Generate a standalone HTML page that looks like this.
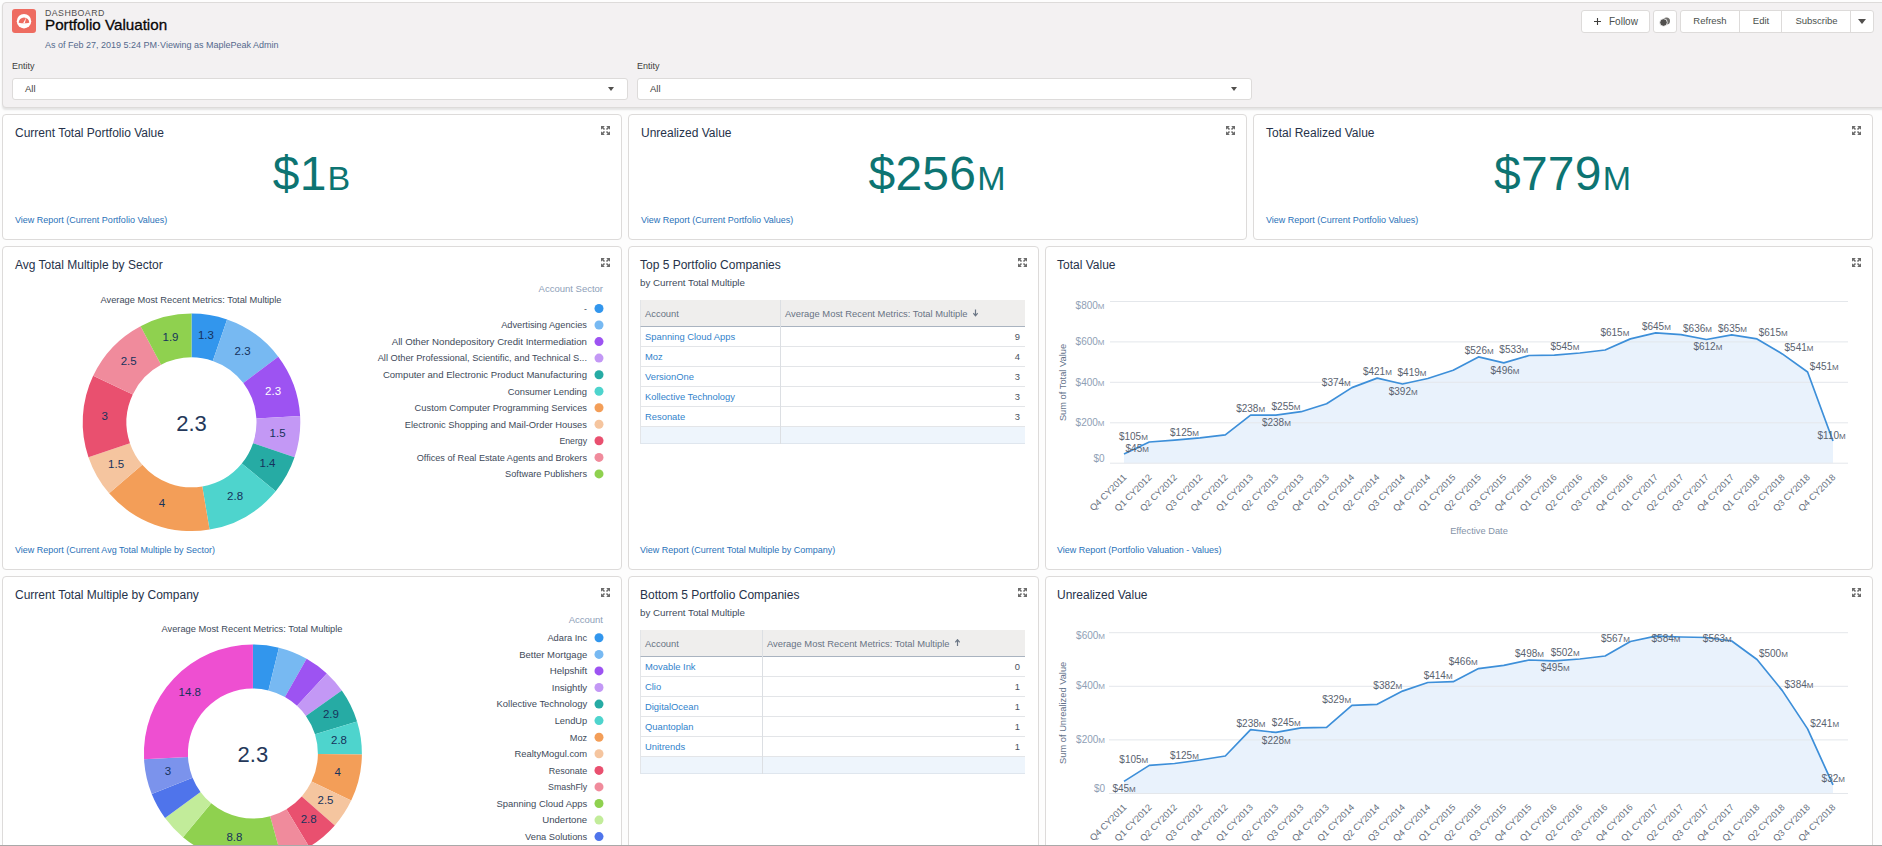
<!DOCTYPE html><html><head><meta charset='utf-8'><style>
*{box-sizing:border-box;margin:0;padding:0}
html,body{width:1882px;height:846px;overflow:hidden;background:#fdfdfd;font-family:"Liberation Sans", sans-serif;position:relative}
.abs{position:absolute}
.hdr{position:absolute;left:2px;top:2px;width:1900px;height:106px;background:#f3f1f2;border:1px solid #dddbda;border-radius:4px;box-shadow:0 2px 2px rgba(0,0,0,.10)}
.panel{position:absolute;background:#fff;border:1px solid #dddbda;border-radius:4px}
.ttl{position:absolute;font-size:12px;color:#26324a;white-space:nowrap;line-height:14px}
.sub{position:absolute;font-size:9.75px;color:#3e4a5a;white-space:nowrap;line-height:12px}
.lnk{position:absolute;font-size:9px;color:#2a72b9;white-space:nowrap;line-height:11px}
.exp{position:absolute;width:9px;height:9px} .exp svg{display:block}
.big{position:absolute;color:#0d7472;white-space:nowrap;font-size:48px;line-height:50px;text-align:center;letter-spacing:0.2px}
.big small{font-size:34px;letter-spacing:0;margin-left:1px}
.btn{position:absolute;top:10px;height:23px;background:#fff;border:1px solid #dddbda;border-radius:3px;font-size:9.5px;color:#4a4f4c;line-height:21px;text-align:center;white-space:nowrap}
.sel{position:absolute;top:78px;height:22px;background:#fff;border:1px solid #dddbda;border-radius:3px;font-size:9.5px;color:#3e3e3c;line-height:20px;padding-left:12px}
.lbl{position:absolute;top:61px;font-size:9px;color:#3e3e3c;line-height:11px}
.arr{position:absolute;top:8px;width:0;height:0;border-left:3.5px solid transparent;border-right:3.5px solid transparent;border-top:4px solid #514f4d}
table{border-collapse:collapse;position:absolute;font-size:9.4px}
</style></head><body><div class="hdr"></div>
<div class="abs" style="left:12px;top:9px;width:24px;height:24px;background:#ee6c61;border-radius:3px"><svg width="24" height="24" viewBox="0 0 24 24" style="position:absolute;left:0;top:0"><circle cx="12" cy="12.2" r="7.2" fill="#fff"/><path d="M6.7,13.8A5.3,5.3 0 0 1 17.3,13.8Q12,14.8 6.7,13.8Z" fill="#ee6c61"/><path d="M11.2,13.9L14.3,8.6L12.8,14.2Z" fill="#fff"/></svg></div>
<div class="abs" style="left:45px;top:8px;font-size:8.8px;letter-spacing:0.45px;color:#514f4d;line-height:10px">DASHBOARD</div>
<div class="abs" style="left:45px;top:16px;font-size:15.2px;color:#080707;line-height:17px;-webkit-text-stroke:0.3px #080707">Portfolio Valuation</div>
<div class="abs" style="left:45px;top:40px;font-size:9px;color:#54698d;line-height:11px">As of Feb 27, 2019 5:24 PM·Viewing as MaplePeak Admin</div>
<div class="btn" style="left:1581px;width:69px"><svg width="9" height="9" viewBox="0 0 9 9" style="position:absolute;left:11px;top:6px"><path d="M4.5,1V8M1,4.5H8" stroke="#3e3e3c" stroke-width="1.1"/></svg><span style="position:absolute;left:27px;top:0;font-size:10px">Follow</span></div>
<div class="btn" style="left:1653px;width:24px"><svg width="12" height="10" viewBox="0 0 12 10" style="position:absolute;left:5px;top:6px"><circle cx="7.5" cy="4" r="3.5" fill="#706e6b"/><circle cx="4.5" cy="5.5" r="3.8" fill="#514f4d" stroke="#fff" stroke-width="0.8"/></svg></div>
<div class="btn" style="left:1680px;width:194px"></div>
<div class="abs" style="left:1680px;top:10px;width:60px;height:23px;line-height:21px;text-align:center;font-size:9.5px;color:#4a4f4c">Refresh</div>
<div class="abs" style="left:1739px;top:11px;width:1px;height:21px;background:#dddbda"></div>
<div class="abs" style="left:1740px;top:10px;width:42px;height:23px;line-height:21px;text-align:center;font-size:9.5px;color:#4a4f4c">Edit</div>
<div class="abs" style="left:1781px;top:11px;width:1px;height:21px;background:#dddbda"></div>
<div class="abs" style="left:1782px;top:10px;width:69px;height:23px;line-height:21px;text-align:center;font-size:9.5px;color:#4a4f4c">Subscribe</div>
<div class="abs" style="left:1850px;top:11px;width:1px;height:21px;background:#dddbda"></div>
<div class="abs" style="left:1858px;top:19px;width:0;height:0;border-left:4px solid transparent;border-right:4px solid transparent;border-top:5px solid #514f4d"></div>
<div class="lbl" style="left:12px">Entity</div>
<div class="sel" style="left:12px;width:616px">All<div class="arr" style="left:595px"></div></div>
<div class="lbl" style="left:637px">Entity</div>
<div class="sel" style="left:637px;width:615px">All<div class="arr" style="left:593px"></div></div>
<div class="panel" style="left:2px;top:114px;width:620px;height:126px"></div>
<div class="panel" style="left:628px;top:114px;width:619px;height:126px"></div>
<div class="panel" style="left:1253px;top:114px;width:620px;height:126px"></div>
<div class="panel" style="left:2px;top:246px;width:620px;height:324px"></div>
<div class="panel" style="left:628px;top:246px;width:411px;height:324px"></div>
<div class="panel" style="left:1045px;top:246px;width:828px;height:324px"></div>
<div class="panel" style="left:2px;top:576px;width:620px;height:325px"></div>
<div class="panel" style="left:628px;top:576px;width:411px;height:325px"></div>
<div class="panel" style="left:1045px;top:576px;width:828px;height:325px"></div>
<div class="ttl" style="left:15px;top:126px">Current Total Portfolio Value</div>
<div class="big" style="left:2px;width:619px;top:149px">$1<small>B</small></div>
<div class="lnk" style="left:15px;top:215px">View Report (Current Portfolio Values)</div>
<div class="exp" style="left:601px;top:126px"><svg width="9" height="9" viewBox="0 0 9 9"><g fill="#6b6b6b" stroke="#6b6b6b" stroke-width="1.6" stroke-linecap="butt"><path d="M0,0H3.8L0,3.8Z" stroke="none"/><path d="M9,0V3.8L5.2,0Z" stroke="none"/><path d="M0,9V5.2L3.8,9Z" stroke="none"/><path d="M9,9H5.2L9,5.2Z" stroke="none"/><path d="M1.5,1.5L3.5,3.5M7.5,1.5L5.5,3.5M1.5,7.5L3.5,5.5M7.5,7.5L5.5,5.5" fill="none"/></g></svg></div>
<div class="ttl" style="left:641px;top:126px">Unrealized Value</div>
<div class="big" style="left:628px;width:618px;top:149px">$256<small>M</small></div>
<div class="lnk" style="left:641px;top:215px">View Report (Current Portfolio Values)</div>
<div class="exp" style="left:1226px;top:126px"><svg width="9" height="9" viewBox="0 0 9 9"><g fill="#6b6b6b" stroke="#6b6b6b" stroke-width="1.6" stroke-linecap="butt"><path d="M0,0H3.8L0,3.8Z" stroke="none"/><path d="M9,0V3.8L5.2,0Z" stroke="none"/><path d="M0,9V5.2L3.8,9Z" stroke="none"/><path d="M9,9H5.2L9,5.2Z" stroke="none"/><path d="M1.5,1.5L3.5,3.5M7.5,1.5L5.5,3.5M1.5,7.5L3.5,5.5M7.5,7.5L5.5,5.5" fill="none"/></g></svg></div>
<div class="ttl" style="left:1266px;top:126px">Total Realized Value</div>
<div class="big" style="left:1253px;width:619px;top:149px">$779<small>M</small></div>
<div class="lnk" style="left:1266px;top:215px">View Report (Current Portfolio Values)</div>
<div class="exp" style="left:1852px;top:126px"><svg width="9" height="9" viewBox="0 0 9 9"><g fill="#6b6b6b" stroke="#6b6b6b" stroke-width="1.6" stroke-linecap="butt"><path d="M0,0H3.8L0,3.8Z" stroke="none"/><path d="M9,0V3.8L5.2,0Z" stroke="none"/><path d="M0,9V5.2L3.8,9Z" stroke="none"/><path d="M9,9H5.2L9,5.2Z" stroke="none"/><path d="M1.5,1.5L3.5,3.5M7.5,1.5L5.5,3.5M1.5,7.5L3.5,5.5M7.5,7.5L5.5,5.5" fill="none"/></g></svg></div>
<div class="ttl" style="left:15px;top:258px">Avg Total Multiple by Sector</div>
<div class="ttl" style="left:640px;top:258px">Top 5 Portfolio Companies</div>
<div class="sub" style="left:640px;top:277px">by Current Total Multiple</div>
<div class="ttl" style="left:1057px;top:258px">Total Value</div>
<div class="lnk" style="left:15px;top:545px">View Report (Current Avg Total Multiple by Sector)</div>
<div class="lnk" style="left:640px;top:545px">View Report (Current Total Multiple by Company)</div>
<div class="lnk" style="left:1057px;top:545px">View Report (Portfolio Valuation - Values)</div>
<div class="exp" style="left:601px;top:258px"><svg width="9" height="9" viewBox="0 0 9 9"><g fill="#6b6b6b" stroke="#6b6b6b" stroke-width="1.6" stroke-linecap="butt"><path d="M0,0H3.8L0,3.8Z" stroke="none"/><path d="M9,0V3.8L5.2,0Z" stroke="none"/><path d="M0,9V5.2L3.8,9Z" stroke="none"/><path d="M9,9H5.2L9,5.2Z" stroke="none"/><path d="M1.5,1.5L3.5,3.5M7.5,1.5L5.5,3.5M1.5,7.5L3.5,5.5M7.5,7.5L5.5,5.5" fill="none"/></g></svg></div>
<div class="exp" style="left:1018px;top:258px"><svg width="9" height="9" viewBox="0 0 9 9"><g fill="#6b6b6b" stroke="#6b6b6b" stroke-width="1.6" stroke-linecap="butt"><path d="M0,0H3.8L0,3.8Z" stroke="none"/><path d="M9,0V3.8L5.2,0Z" stroke="none"/><path d="M0,9V5.2L3.8,9Z" stroke="none"/><path d="M9,9H5.2L9,5.2Z" stroke="none"/><path d="M1.5,1.5L3.5,3.5M7.5,1.5L5.5,3.5M1.5,7.5L3.5,5.5M7.5,7.5L5.5,5.5" fill="none"/></g></svg></div>
<div class="exp" style="left:1852px;top:258px"><svg width="9" height="9" viewBox="0 0 9 9"><g fill="#6b6b6b" stroke="#6b6b6b" stroke-width="1.6" stroke-linecap="butt"><path d="M0,0H3.8L0,3.8Z" stroke="none"/><path d="M9,0V3.8L5.2,0Z" stroke="none"/><path d="M0,9V5.2L3.8,9Z" stroke="none"/><path d="M9,9H5.2L9,5.2Z" stroke="none"/><path d="M1.5,1.5L3.5,3.5M7.5,1.5L5.5,3.5M1.5,7.5L3.5,5.5M7.5,7.5L5.5,5.5" fill="none"/></g></svg></div>
<div class="ttl" style="left:15px;top:588px">Current Total Multiple by Company</div>
<div class="ttl" style="left:640px;top:588px">Bottom 5 Portfolio Companies</div>
<div class="sub" style="left:640px;top:607px">by Current Total Multiple</div>
<div class="ttl" style="left:1057px;top:588px">Unrealized Value</div>
<div class="exp" style="left:601px;top:588px"><svg width="9" height="9" viewBox="0 0 9 9"><g fill="#6b6b6b" stroke="#6b6b6b" stroke-width="1.6" stroke-linecap="butt"><path d="M0,0H3.8L0,3.8Z" stroke="none"/><path d="M9,0V3.8L5.2,0Z" stroke="none"/><path d="M0,9V5.2L3.8,9Z" stroke="none"/><path d="M9,9H5.2L9,5.2Z" stroke="none"/><path d="M1.5,1.5L3.5,3.5M7.5,1.5L5.5,3.5M1.5,7.5L3.5,5.5M7.5,7.5L5.5,5.5" fill="none"/></g></svg></div>
<div class="exp" style="left:1018px;top:588px"><svg width="9" height="9" viewBox="0 0 9 9"><g fill="#6b6b6b" stroke="#6b6b6b" stroke-width="1.6" stroke-linecap="butt"><path d="M0,0H3.8L0,3.8Z" stroke="none"/><path d="M9,0V3.8L5.2,0Z" stroke="none"/><path d="M0,9V5.2L3.8,9Z" stroke="none"/><path d="M9,9H5.2L9,5.2Z" stroke="none"/><path d="M1.5,1.5L3.5,3.5M7.5,1.5L5.5,3.5M1.5,7.5L3.5,5.5M7.5,7.5L5.5,5.5" fill="none"/></g></svg></div>
<div class="exp" style="left:1852px;top:588px"><svg width="9" height="9" viewBox="0 0 9 9"><g fill="#6b6b6b" stroke="#6b6b6b" stroke-width="1.6" stroke-linecap="butt"><path d="M0,0H3.8L0,3.8Z" stroke="none"/><path d="M9,0V3.8L5.2,0Z" stroke="none"/><path d="M0,9V5.2L3.8,9Z" stroke="none"/><path d="M9,9H5.2L9,5.2Z" stroke="none"/><path d="M1.5,1.5L3.5,3.5M7.5,1.5L5.5,3.5M1.5,7.5L3.5,5.5M7.5,7.5L5.5,5.5" fill="none"/></g></svg></div>
<svg class="abs" style="left:0;top:0" width="1882" height="846" viewBox="0 0 1882 846" font-family='"Liberation Sans", sans-serif'><text x="191" y="303" text-anchor="middle" font-size="9.3" fill="#3e4a5a">Average Most Recent Metrics: Total Multiple</text>
<path d="M191.50,313.50A108.8,108.8 0 0 1 227.10,319.49L212.77,360.88A65,65 0 0 0 191.50,357.30Z" fill="#3296ed"/>
<text x="205.9" y="339.4" text-anchor="middle" font-size="11.5" fill="#16325c">1.3</text>
<path d="M227.10,319.49A108.8,108.8 0 0 1 278.27,356.67L243.34,383.09A65,65 0 0 0 212.77,360.88Z" fill="#77b9f2"/>
<text x="242.6" y="354.8" text-anchor="middle" font-size="11.5" fill="#16325c">2.3</text>
<path d="M278.27,356.67A108.8,108.8 0 0 1 300.12,416.03L256.39,418.55A65,65 0 0 0 243.34,383.09Z" fill="#9d53f2"/>
<text x="273.1" y="395.1" text-anchor="middle" font-size="11.5" fill="#ffffff">2.3</text>
<path d="M300.12,416.03A108.8,108.8 0 0 1 294.54,457.25L253.06,443.18A65,65 0 0 0 256.39,418.55Z" fill="#c398f5"/>
<text x="277.6" y="436.8" text-anchor="middle" font-size="11.5" fill="#16325c">1.5</text>
<path d="M294.54,457.25A108.8,108.8 0 0 1 275.69,491.22L241.80,463.48A65,65 0 0 0 253.06,443.18Z" fill="#26aba4"/>
<text x="267.5" y="467.3" text-anchor="middle" font-size="11.5" fill="#16325c">1.4</text>
<path d="M275.69,491.22A108.8,108.8 0 0 1 209.55,529.59L202.29,486.40A65,65 0 0 0 241.80,463.48Z" fill="#4ed4cd"/>
<text x="235.1" y="500.3" text-anchor="middle" font-size="11.5" fill="#16325c">2.8</text>
<path d="M209.55,529.59A108.8,108.8 0 0 1 109.11,493.36L142.28,464.75A65,65 0 0 0 202.29,486.40Z" fill="#f39e58"/>
<text x="162.0" y="506.8" text-anchor="middle" font-size="11.5" fill="#16325c">4</text>
<path d="M109.11,493.36A108.8,108.8 0 0 1 88.46,457.25L129.94,443.18A65,65 0 0 0 142.28,464.75Z" fill="#f5c59f"/>
<text x="116.1" y="468.2" text-anchor="middle" font-size="11.5" fill="#16325c">1.5</text>
<path d="M88.46,457.25A108.8,108.8 0 0 1 93.17,375.72L132.76,394.47A65,65 0 0 0 129.94,443.18Z" fill="#e9506f"/>
<text x="104.7" y="420.1" text-anchor="middle" font-size="11.5" fill="#16325c">3</text>
<path d="M93.17,375.72A108.8,108.8 0 0 1 140.56,326.16L161.07,364.86A65,65 0 0 0 132.76,394.47Z" fill="#f08b9c"/>
<text x="128.7" y="365.0" text-anchor="middle" font-size="11.5" fill="#16325c">2.5</text>
<path d="M140.56,326.16A108.8,108.8 0 0 1 191.50,313.50L191.50,357.30A65,65 0 0 0 161.07,364.86Z" fill="#8fd14f"/>
<text x="170.5" y="340.8" text-anchor="middle" font-size="11.5" fill="#16325c">1.9</text>
<text x="191.5" y="431" text-anchor="middle" font-size="22" fill="#25385a">2.3</text>
<text x="603" y="292" text-anchor="end" font-size="9.5" fill="#8ea0b8">Account Sector</text>
<text x="584.1" y="311.8" textLength="2.9" lengthAdjust="spacingAndGlyphs" font-size="9.5" fill="#3e4a5a">-</text>
<circle cx="599" cy="308.5" r="4.5" fill="#3296ed"/>
<text x="501.2" y="328.3" textLength="85.8" lengthAdjust="spacingAndGlyphs" font-size="9.5" fill="#3e4a5a">Advertising Agencies</text>
<circle cx="599" cy="325.0" r="4.5" fill="#77b9f2"/>
<text x="391.7" y="344.9" textLength="195.3" lengthAdjust="spacingAndGlyphs" font-size="9.5" fill="#3e4a5a">All Other Nondepository Credit Intermediation</text>
<circle cx="599" cy="341.6" r="4.5" fill="#9d53f2"/>
<text x="377.7" y="361.4" textLength="209.3" lengthAdjust="spacingAndGlyphs" font-size="9.5" fill="#3e4a5a">All Other Professional, Scientific, and Technical S...</text>
<circle cx="599" cy="358.1" r="4.5" fill="#c398f5"/>
<text x="382.9" y="378.0" textLength="204.1" lengthAdjust="spacingAndGlyphs" font-size="9.5" fill="#3e4a5a">Computer and Electronic Product Manufacturing</text>
<circle cx="599" cy="374.7" r="4.5" fill="#26aba4"/>
<text x="507.7" y="394.5" textLength="79.3" lengthAdjust="spacingAndGlyphs" font-size="9.5" fill="#3e4a5a">Consumer Lending</text>
<circle cx="599" cy="391.2" r="4.5" fill="#4ed4cd"/>
<text x="414.6" y="411.0" textLength="172.4" lengthAdjust="spacingAndGlyphs" font-size="9.5" fill="#3e4a5a">Custom Computer Programming Services</text>
<circle cx="599" cy="407.7" r="4.5" fill="#f39e58"/>
<text x="404.7" y="427.6" textLength="182.3" lengthAdjust="spacingAndGlyphs" font-size="9.5" fill="#3e4a5a">Electronic Shopping and Mail-Order Houses</text>
<circle cx="599" cy="424.3" r="4.5" fill="#f5c59f"/>
<text x="559.4" y="444.1" textLength="27.6" lengthAdjust="spacingAndGlyphs" font-size="9.5" fill="#3e4a5a">Energy</text>
<circle cx="599" cy="440.8" r="4.5" fill="#e9506f"/>
<text x="416.7" y="460.7" textLength="170.3" lengthAdjust="spacingAndGlyphs" font-size="9.5" fill="#3e4a5a">Offices of Real Estate Agents and Brokers</text>
<circle cx="599" cy="457.4" r="4.5" fill="#f08b9c"/>
<text x="505.1" y="477.2" textLength="81.9" lengthAdjust="spacingAndGlyphs" font-size="9.5" fill="#3e4a5a">Software Publishers</text>
<circle cx="599" cy="473.9" r="4.5" fill="#8fd14f"/>
<text x="252" y="632" text-anchor="middle" font-size="9.3" fill="#3e4a5a">Average Most Recent Metrics: Total Multiple</text>
<path d="M252.90,644.50A109,109 0 0 1 278.94,647.66L268.43,690.38A65,65 0 0 0 252.90,688.50Z" fill="#3296ed"/>
<path d="M278.94,647.66A109,109 0 0 1 306.62,658.66L284.94,696.94A65,65 0 0 0 268.43,690.38Z" fill="#77b9f2"/>
<path d="M306.62,658.66A109,109 0 0 1 326.85,673.42L297.00,705.75A65,65 0 0 0 284.94,696.94Z" fill="#9d53f2"/>
<path d="M326.85,673.42A109,109 0 0 1 341.81,690.45L305.92,715.90A65,65 0 0 0 297.00,705.75Z" fill="#c398f5"/>
<path d="M341.81,690.45A109,109 0 0 1 357.07,721.41L315.02,734.37A65,65 0 0 0 305.92,715.90Z" fill="#26aba4"/>
<text x="330.9" y="717.8" text-anchor="middle" font-size="11.5" fill="#16325c">2.9</text>
<path d="M357.07,721.41A109,109 0 0 1 361.90,754.40L317.90,754.03A65,65 0 0 0 315.02,734.37Z" fill="#4ed4cd"/>
<text x="339.0" y="743.7" text-anchor="middle" font-size="11.5" fill="#16325c">2.8</text>
<path d="M361.90,754.40A109,109 0 0 1 351.20,800.60L311.52,781.59A65,65 0 0 0 317.90,754.03Z" fill="#f39e58"/>
<text x="337.7" y="775.9" text-anchor="middle" font-size="11.5" fill="#16325c">4</text>
<path d="M351.20,800.60A109,109 0 0 1 334.78,825.45L301.73,796.41A65,65 0 0 0 311.52,781.59Z" fill="#f5c59f"/>
<text x="325.5" y="804.3" text-anchor="middle" font-size="11.5" fill="#16325c">2.5</text>
<path d="M334.78,825.45A109,109 0 0 1 309.20,846.83L286.47,809.16A65,65 0 0 0 301.73,796.41Z" fill="#e9506f"/>
<text x="308.7" y="823.0" text-anchor="middle" font-size="11.5" fill="#16325c">2.8</text>
<path d="M309.20,846.83A109,109 0 0 1 281.83,858.59L270.15,816.17A65,65 0 0 0 286.47,809.16Z" fill="#f08b9c"/>
<path d="M281.83,858.59A109,109 0 0 1 182.99,837.13L211.21,803.37A65,65 0 0 0 270.15,816.17Z" fill="#8fd14f"/>
<text x="234.4" y="841.3" text-anchor="middle" font-size="11.5" fill="#16325c">8.8</text>
<path d="M182.99,837.13A109,109 0 0 1 165.03,818.00L200.50,791.97A65,65 0 0 0 211.21,803.37Z" fill="#c2ec9a"/>
<path d="M165.03,818.00A109,109 0 0 1 151.72,794.04L192.56,777.67A65,65 0 0 0 200.50,791.97Z" fill="#4f74eb"/>
<path d="M151.72,794.04A109,109 0 0 1 144.05,759.17L187.99,756.88A65,65 0 0 0 192.56,777.67Z" fill="#7b93ec"/>
<text x="167.9" y="775.0" text-anchor="middle" font-size="11.5" fill="#16325c">3</text>
<path d="M144.05,759.17A109,109 0 0 1 252.90,644.50L252.90,688.50A65,65 0 0 0 187.99,756.88Z" fill="#ee4fd1"/>
<text x="189.8" y="696.4" text-anchor="middle" font-size="11.5" fill="#16325c">14.8</text>
<text x="252.9" y="762" text-anchor="middle" font-size="22" fill="#25385a">2.3</text>
<text x="603" y="622.5" text-anchor="end" font-size="9.5" fill="#8ea0b8">Account</text>
<text x="547.4" y="641.1" textLength="39.8" lengthAdjust="spacingAndGlyphs" font-size="9.5" fill="#3e4a5a">Adara Inc</text>
<circle cx="599" cy="637.8" r="4.5" fill="#3296ed"/>
<text x="519.2" y="657.7" textLength="68.0" lengthAdjust="spacingAndGlyphs" font-size="9.5" fill="#3e4a5a">Better Mortgage</text>
<circle cx="599" cy="654.4" r="4.5" fill="#77b9f2"/>
<text x="549.7" y="674.2" textLength="37.5" lengthAdjust="spacingAndGlyphs" font-size="9.5" fill="#3e4a5a">Helpshift</text>
<circle cx="599" cy="670.9" r="4.5" fill="#9d53f2"/>
<text x="551.7" y="690.8" textLength="35.5" lengthAdjust="spacingAndGlyphs" font-size="9.5" fill="#3e4a5a">Insightly</text>
<circle cx="599" cy="687.5" r="4.5" fill="#c398f5"/>
<text x="496.5" y="707.4" textLength="90.7" lengthAdjust="spacingAndGlyphs" font-size="9.5" fill="#3e4a5a">Kollective Technology</text>
<circle cx="599" cy="704.1" r="4.5" fill="#26aba4"/>
<text x="554.7" y="723.9" textLength="32.5" lengthAdjust="spacingAndGlyphs" font-size="9.5" fill="#3e4a5a">LendUp</text>
<circle cx="599" cy="720.6" r="4.5" fill="#4ed4cd"/>
<text x="569.8" y="740.5" textLength="17.4" lengthAdjust="spacingAndGlyphs" font-size="9.5" fill="#3e4a5a">Moz</text>
<circle cx="599" cy="737.2" r="4.5" fill="#f39e58"/>
<text x="514.5" y="757.1" textLength="72.7" lengthAdjust="spacingAndGlyphs" font-size="9.5" fill="#3e4a5a">RealtyMogul.com</text>
<circle cx="599" cy="753.8" r="4.5" fill="#f5c59f"/>
<text x="548.8" y="773.7" textLength="38.4" lengthAdjust="spacingAndGlyphs" font-size="9.5" fill="#3e4a5a">Resonate</text>
<circle cx="599" cy="770.4" r="4.5" fill="#e9506f"/>
<text x="548.0" y="790.2" textLength="39.2" lengthAdjust="spacingAndGlyphs" font-size="9.5" fill="#3e4a5a">SmashFly</text>
<circle cx="599" cy="786.9" r="4.5" fill="#f08b9c"/>
<text x="496.5" y="806.8" textLength="90.7" lengthAdjust="spacingAndGlyphs" font-size="9.5" fill="#3e4a5a">Spanning Cloud Apps</text>
<circle cx="599" cy="803.5" r="4.5" fill="#8fd14f"/>
<text x="542.2" y="823.4" textLength="45.0" lengthAdjust="spacingAndGlyphs" font-size="9.5" fill="#3e4a5a">Undertone</text>
<circle cx="599" cy="820.1" r="4.5" fill="#c2ec9a"/>
<text x="525.0" y="839.9" textLength="62.2" lengthAdjust="spacingAndGlyphs" font-size="9.5" fill="#3e4a5a">Vena Solutions</text>
<circle cx="599" cy="836.6" r="4.5" fill="#4f74eb"/>
<polygon points="1124.0,463.2 1124.0,454.1 1149.3,442.0 1174.6,440.2 1200.0,437.9 1225.3,434.9 1250.6,415.1 1275.9,415.1 1301.2,411.7 1326.6,403.8 1351.9,387.6 1377.2,378.1 1402.5,384.0 1427.8,378.5 1453.2,370.2 1478.5,356.9 1503.8,362.9 1529.1,355.5 1554.4,355.1 1579.8,353.0 1605.1,350.0 1630.4,338.9 1655.7,332.8 1681.0,334.6 1706.4,339.5 1731.7,334.9 1757.0,338.9 1782.3,353.9 1807.6,372.0 1833.0,441.0 1833.0,463.2" fill="#e9f2fc"/>
<line x1="1110" y1="301.5" x2="1848" y2="301.5" stroke="#e4e7eb" stroke-width="1"/>
<line x1="1110" y1="341.9" x2="1848" y2="341.9" stroke="#e4e7eb" stroke-width="1"/>
<line x1="1110" y1="382.3" x2="1848" y2="382.3" stroke="#e4e7eb" stroke-width="1"/>
<line x1="1110" y1="422.8" x2="1848" y2="422.8" stroke="#e4e7eb" stroke-width="1"/>
<line x1="1110" y1="463.2" x2="1848" y2="463.2" stroke="#e4e7eb" stroke-width="1"/>
<polyline points="1124.0,454.1 1149.3,442.0 1174.6,440.2 1200.0,437.9 1225.3,434.9 1250.6,415.1 1275.9,415.1 1301.2,411.7 1326.6,403.8 1351.9,387.6 1377.2,378.1 1402.5,384.0 1427.8,378.5 1453.2,370.2 1478.5,356.9 1503.8,362.9 1529.1,355.5 1554.4,355.1 1579.8,353.0 1605.1,350.0 1630.4,338.9 1655.7,332.8 1681.0,334.6 1706.4,339.5 1731.7,334.9 1757.0,338.9 1782.3,353.9 1807.6,372.0 1833.0,441.0" fill="none" stroke="#3d8fd9" stroke-width="1.7" stroke-linejoin="round"/>
<text x="1104.5" y="309.2" text-anchor="end" font-size="10" fill="#8fa0b5">$800<tspan font-size="8">M</tspan></text>
<text x="1104.5" y="344.5" text-anchor="end" font-size="10" fill="#8fa0b5">$600<tspan font-size="8">M</tspan></text>
<text x="1104.5" y="385.8" text-anchor="end" font-size="10" fill="#8fa0b5">$400<tspan font-size="8">M</tspan></text>
<text x="1104.5" y="426" text-anchor="end" font-size="10" fill="#8fa0b5">$200<tspan font-size="8">M</tspan></text>
<text x="1104.5" y="462" text-anchor="end" font-size="10" fill="#8fa0b5">$0</text>
<text x="1133.4" y="439.5" text-anchor="middle" font-size="10" fill="#5a6370">$105<tspan font-size="8">M</tspan></text>
<text x="1137.2" y="452.2" text-anchor="middle" font-size="10" fill="#5a6370">$45<tspan font-size="8">M</tspan></text>
<text x="1184.5" y="436.4" text-anchor="middle" font-size="10" fill="#5a6370">$125<tspan font-size="8">M</tspan></text>
<text x="1250.6" y="412.2" text-anchor="middle" font-size="10" fill="#5a6370">$238<tspan font-size="8">M</tspan></text>
<text x="1286.0" y="409.5" text-anchor="middle" font-size="10" fill="#5a6370">$255<tspan font-size="8">M</tspan></text>
<text x="1276.4" y="425.7" text-anchor="middle" font-size="10" fill="#5a6370">$238<tspan font-size="8">M</tspan></text>
<text x="1336.3" y="386.1" text-anchor="middle" font-size="10" fill="#5a6370">$374<tspan font-size="8">M</tspan></text>
<text x="1377.4" y="375.3" text-anchor="middle" font-size="10" fill="#5a6370">$421<tspan font-size="8">M</tspan></text>
<text x="1412.0" y="376.1" text-anchor="middle" font-size="10" fill="#5a6370">$419<tspan font-size="8">M</tspan></text>
<text x="1403.2" y="394.9" text-anchor="middle" font-size="10" fill="#5a6370">$392<tspan font-size="8">M</tspan></text>
<text x="1479.2" y="354.2" text-anchor="middle" font-size="10" fill="#5a6370">$526<tspan font-size="8">M</tspan></text>
<text x="1513.8" y="353.0" text-anchor="middle" font-size="10" fill="#5a6370">$533<tspan font-size="8">M</tspan></text>
<text x="1505.0" y="373.8" text-anchor="middle" font-size="10" fill="#5a6370">$496<tspan font-size="8">M</tspan></text>
<text x="1564.9" y="350.3" text-anchor="middle" font-size="10" fill="#5a6370">$545<tspan font-size="8">M</tspan></text>
<text x="1614.9" y="336.1" text-anchor="middle" font-size="10" fill="#5a6370">$615<tspan font-size="8">M</tspan></text>
<text x="1656.4" y="329.6" text-anchor="middle" font-size="10" fill="#5a6370">$645<tspan font-size="8">M</tspan></text>
<text x="1697.5" y="332.3" text-anchor="middle" font-size="10" fill="#5a6370">$636<tspan font-size="8">M</tspan></text>
<text x="1707.9" y="350.0" text-anchor="middle" font-size="10" fill="#5a6370">$612<tspan font-size="8">M</tspan></text>
<text x="1732.5" y="331.9" text-anchor="middle" font-size="10" fill="#5a6370">$635<tspan font-size="8">M</tspan></text>
<text x="1773.2" y="336.1" text-anchor="middle" font-size="10" fill="#5a6370">$615<tspan font-size="8">M</tspan></text>
<text x="1799.0" y="351.1" text-anchor="middle" font-size="10" fill="#5a6370">$541<tspan font-size="8">M</tspan></text>
<text x="1824.3" y="370.3" text-anchor="middle" font-size="10" fill="#5a6370">$451<tspan font-size="8">M</tspan></text>
<text x="1831.6" y="439.1" text-anchor="middle" font-size="10" fill="#5a6370">$110<tspan font-size="8">M</tspan></text>
<text transform="translate(1127.0,478) rotate(-45)" text-anchor="end" font-size="9.2" fill="#66707e">Q4 CY2011</text>
<text transform="translate(1152.3,478) rotate(-45)" text-anchor="end" font-size="9.2" fill="#66707e">Q1 CY2012</text>
<text transform="translate(1177.6,478) rotate(-45)" text-anchor="end" font-size="9.2" fill="#66707e">Q2 CY2012</text>
<text transform="translate(1203.0,478) rotate(-45)" text-anchor="end" font-size="9.2" fill="#66707e">Q3 CY2012</text>
<text transform="translate(1228.3,478) rotate(-45)" text-anchor="end" font-size="9.2" fill="#66707e">Q4 CY2012</text>
<text transform="translate(1253.6,478) rotate(-45)" text-anchor="end" font-size="9.2" fill="#66707e">Q1 CY2013</text>
<text transform="translate(1278.9,478) rotate(-45)" text-anchor="end" font-size="9.2" fill="#66707e">Q2 CY2013</text>
<text transform="translate(1304.2,478) rotate(-45)" text-anchor="end" font-size="9.2" fill="#66707e">Q3 CY2013</text>
<text transform="translate(1329.6,478) rotate(-45)" text-anchor="end" font-size="9.2" fill="#66707e">Q4 CY2013</text>
<text transform="translate(1354.9,478) rotate(-45)" text-anchor="end" font-size="9.2" fill="#66707e">Q1 CY2014</text>
<text transform="translate(1380.2,478) rotate(-45)" text-anchor="end" font-size="9.2" fill="#66707e">Q2 CY2014</text>
<text transform="translate(1405.5,478) rotate(-45)" text-anchor="end" font-size="9.2" fill="#66707e">Q3 CY2014</text>
<text transform="translate(1430.8,478) rotate(-45)" text-anchor="end" font-size="9.2" fill="#66707e">Q4 CY2014</text>
<text transform="translate(1456.2,478) rotate(-45)" text-anchor="end" font-size="9.2" fill="#66707e">Q1 CY2015</text>
<text transform="translate(1481.5,478) rotate(-45)" text-anchor="end" font-size="9.2" fill="#66707e">Q2 CY2015</text>
<text transform="translate(1506.8,478) rotate(-45)" text-anchor="end" font-size="9.2" fill="#66707e">Q3 CY2015</text>
<text transform="translate(1532.1,478) rotate(-45)" text-anchor="end" font-size="9.2" fill="#66707e">Q4 CY2015</text>
<text transform="translate(1557.4,478) rotate(-45)" text-anchor="end" font-size="9.2" fill="#66707e">Q1 CY2016</text>
<text transform="translate(1582.8,478) rotate(-45)" text-anchor="end" font-size="9.2" fill="#66707e">Q2 CY2016</text>
<text transform="translate(1608.1,478) rotate(-45)" text-anchor="end" font-size="9.2" fill="#66707e">Q3 CY2016</text>
<text transform="translate(1633.4,478) rotate(-45)" text-anchor="end" font-size="9.2" fill="#66707e">Q4 CY2016</text>
<text transform="translate(1658.7,478) rotate(-45)" text-anchor="end" font-size="9.2" fill="#66707e">Q1 CY2017</text>
<text transform="translate(1684.0,478) rotate(-45)" text-anchor="end" font-size="9.2" fill="#66707e">Q2 CY2017</text>
<text transform="translate(1709.4,478) rotate(-45)" text-anchor="end" font-size="9.2" fill="#66707e">Q3 CY2017</text>
<text transform="translate(1734.7,478) rotate(-45)" text-anchor="end" font-size="9.2" fill="#66707e">Q4 CY2017</text>
<text transform="translate(1760.0,478) rotate(-45)" text-anchor="end" font-size="9.2" fill="#66707e">Q1 CY2018</text>
<text transform="translate(1785.3,478) rotate(-45)" text-anchor="end" font-size="9.2" fill="#66707e">Q2 CY2018</text>
<text transform="translate(1810.6,478) rotate(-45)" text-anchor="end" font-size="9.2" fill="#66707e">Q3 CY2018</text>
<text transform="translate(1836.0,478) rotate(-45)" text-anchor="end" font-size="9.2" fill="#66707e">Q4 CY2018</text>
<text transform="translate(1065.5,382.5) rotate(-90)" text-anchor="middle" font-size="9.3" fill="#64728a">Sum of Total Value</text>
<text x="1479.0" y="533.5" text-anchor="middle" font-size="9.3" fill="#8593a8">Effective Date</text>
<polygon points="1124.0,793.5 1124.0,781.4 1149.3,765.4 1174.6,763.5 1200.0,760.0 1225.3,756.0 1250.6,729.7 1275.9,732.4 1301.2,727.8 1326.6,727.3 1351.9,705.3 1377.2,704.3 1402.5,691.1 1427.8,682.5 1453.2,681.7 1478.5,668.6 1503.8,665.4 1529.1,660.0 1554.4,660.8 1579.8,659.0 1605.1,656.0 1630.4,641.5 1655.7,636.2 1681.0,637.0 1706.4,637.5 1731.7,641.0 1757.0,659.5 1782.3,690.6 1807.6,728.9 1833.0,784.9 1833.0,793.5" fill="#e9f2fc"/>
<line x1="1109" y1="632.7" x2="1848" y2="632.7" stroke="#e4e7eb" stroke-width="1"/>
<line x1="1109" y1="686.3" x2="1848" y2="686.3" stroke="#e4e7eb" stroke-width="1"/>
<line x1="1109" y1="739.9" x2="1848" y2="739.9" stroke="#e4e7eb" stroke-width="1"/>
<line x1="1109" y1="793.5" x2="1848" y2="793.5" stroke="#e4e7eb" stroke-width="1"/>
<polyline points="1124.0,781.4 1149.3,765.4 1174.6,763.5 1200.0,760.0 1225.3,756.0 1250.6,729.7 1275.9,732.4 1301.2,727.8 1326.6,727.3 1351.9,705.3 1377.2,704.3 1402.5,691.1 1427.8,682.5 1453.2,681.7 1478.5,668.6 1503.8,665.4 1529.1,660.0 1554.4,660.8 1579.8,659.0 1605.1,656.0 1630.4,641.5 1655.7,636.2 1681.0,637.0 1706.4,637.5 1731.7,641.0 1757.0,659.5 1782.3,690.6 1807.6,728.9 1833.0,784.9" fill="none" stroke="#3d8fd9" stroke-width="1.7" stroke-linejoin="round"/>
<text x="1105" y="638.7" text-anchor="end" font-size="10" fill="#8fa0b5">$600<tspan font-size="8">M</tspan></text>
<text x="1105" y="689" text-anchor="end" font-size="10" fill="#8fa0b5">$400<tspan font-size="8">M</tspan></text>
<text x="1105" y="742.5" text-anchor="end" font-size="10" fill="#8fa0b5">$200<tspan font-size="8">M</tspan></text>
<text x="1105" y="792.2" text-anchor="end" font-size="10" fill="#8fa0b5">$0</text>
<text x="1133.8" y="763.4" text-anchor="middle" font-size="10" fill="#5a6370">$105<tspan font-size="8">M</tspan></text>
<text x="1124.1" y="792.2" text-anchor="middle" font-size="10" fill="#5a6370">$45<tspan font-size="8">M</tspan></text>
<text x="1184.4" y="758.6" text-anchor="middle" font-size="10" fill="#5a6370">$125<tspan font-size="8">M</tspan></text>
<text x="1251.0" y="726.5" text-anchor="middle" font-size="10" fill="#5a6370">$238<tspan font-size="8">M</tspan></text>
<text x="1286.3" y="725.6" text-anchor="middle" font-size="10" fill="#5a6370">$245<tspan font-size="8">M</tspan></text>
<text x="1276.3" y="743.5" text-anchor="middle" font-size="10" fill="#5a6370">$228<tspan font-size="8">M</tspan></text>
<text x="1336.6" y="702.8" text-anchor="middle" font-size="10" fill="#5a6370">$329<tspan font-size="8">M</tspan></text>
<text x="1387.8" y="689.0" text-anchor="middle" font-size="10" fill="#5a6370">$382<tspan font-size="8">M</tspan></text>
<text x="1438.1" y="679.4" text-anchor="middle" font-size="10" fill="#5a6370">$414<tspan font-size="8">M</tspan></text>
<text x="1463.2" y="665.3" text-anchor="middle" font-size="10" fill="#5a6370">$466<tspan font-size="8">M</tspan></text>
<text x="1529.5" y="656.7" text-anchor="middle" font-size="10" fill="#5a6370">$498<tspan font-size="8">M</tspan></text>
<text x="1565.1" y="656.0" text-anchor="middle" font-size="10" fill="#5a6370">$502<tspan font-size="8">M</tspan></text>
<text x="1555.2" y="671.4" text-anchor="middle" font-size="10" fill="#5a6370">$495<tspan font-size="8">M</tspan></text>
<text x="1615.4" y="641.9" text-anchor="middle" font-size="10" fill="#5a6370">$567<tspan font-size="8">M</tspan></text>
<text x="1666.0" y="642.3" text-anchor="middle" font-size="10" fill="#5a6370">$584<tspan font-size="8">M</tspan></text>
<text x="1717.3" y="641.9" text-anchor="middle" font-size="10" fill="#5a6370">$563<tspan font-size="8">M</tspan></text>
<text x="1773.4" y="657.0" text-anchor="middle" font-size="10" fill="#5a6370">$500<tspan font-size="8">M</tspan></text>
<text x="1799.0" y="688.1" text-anchor="middle" font-size="10" fill="#5a6370">$384<tspan font-size="8">M</tspan></text>
<text x="1824.6" y="726.5" text-anchor="middle" font-size="10" fill="#5a6370">$241<tspan font-size="8">M</tspan></text>
<text x="1833.3" y="782.3" text-anchor="middle" font-size="10" fill="#5a6370">$32<tspan font-size="8">M</tspan></text>
<text transform="translate(1127.0,808) rotate(-45)" text-anchor="end" font-size="9.2" fill="#66707e">Q4 CY2011</text>
<text transform="translate(1152.3,808) rotate(-45)" text-anchor="end" font-size="9.2" fill="#66707e">Q1 CY2012</text>
<text transform="translate(1177.6,808) rotate(-45)" text-anchor="end" font-size="9.2" fill="#66707e">Q2 CY2012</text>
<text transform="translate(1203.0,808) rotate(-45)" text-anchor="end" font-size="9.2" fill="#66707e">Q3 CY2012</text>
<text transform="translate(1228.3,808) rotate(-45)" text-anchor="end" font-size="9.2" fill="#66707e">Q4 CY2012</text>
<text transform="translate(1253.6,808) rotate(-45)" text-anchor="end" font-size="9.2" fill="#66707e">Q1 CY2013</text>
<text transform="translate(1278.9,808) rotate(-45)" text-anchor="end" font-size="9.2" fill="#66707e">Q2 CY2013</text>
<text transform="translate(1304.2,808) rotate(-45)" text-anchor="end" font-size="9.2" fill="#66707e">Q3 CY2013</text>
<text transform="translate(1329.6,808) rotate(-45)" text-anchor="end" font-size="9.2" fill="#66707e">Q4 CY2013</text>
<text transform="translate(1354.9,808) rotate(-45)" text-anchor="end" font-size="9.2" fill="#66707e">Q1 CY2014</text>
<text transform="translate(1380.2,808) rotate(-45)" text-anchor="end" font-size="9.2" fill="#66707e">Q2 CY2014</text>
<text transform="translate(1405.5,808) rotate(-45)" text-anchor="end" font-size="9.2" fill="#66707e">Q3 CY2014</text>
<text transform="translate(1430.8,808) rotate(-45)" text-anchor="end" font-size="9.2" fill="#66707e">Q4 CY2014</text>
<text transform="translate(1456.2,808) rotate(-45)" text-anchor="end" font-size="9.2" fill="#66707e">Q1 CY2015</text>
<text transform="translate(1481.5,808) rotate(-45)" text-anchor="end" font-size="9.2" fill="#66707e">Q2 CY2015</text>
<text transform="translate(1506.8,808) rotate(-45)" text-anchor="end" font-size="9.2" fill="#66707e">Q3 CY2015</text>
<text transform="translate(1532.1,808) rotate(-45)" text-anchor="end" font-size="9.2" fill="#66707e">Q4 CY2015</text>
<text transform="translate(1557.4,808) rotate(-45)" text-anchor="end" font-size="9.2" fill="#66707e">Q1 CY2016</text>
<text transform="translate(1582.8,808) rotate(-45)" text-anchor="end" font-size="9.2" fill="#66707e">Q2 CY2016</text>
<text transform="translate(1608.1,808) rotate(-45)" text-anchor="end" font-size="9.2" fill="#66707e">Q3 CY2016</text>
<text transform="translate(1633.4,808) rotate(-45)" text-anchor="end" font-size="9.2" fill="#66707e">Q4 CY2016</text>
<text transform="translate(1658.7,808) rotate(-45)" text-anchor="end" font-size="9.2" fill="#66707e">Q1 CY2017</text>
<text transform="translate(1684.0,808) rotate(-45)" text-anchor="end" font-size="9.2" fill="#66707e">Q2 CY2017</text>
<text transform="translate(1709.4,808) rotate(-45)" text-anchor="end" font-size="9.2" fill="#66707e">Q3 CY2017</text>
<text transform="translate(1734.7,808) rotate(-45)" text-anchor="end" font-size="9.2" fill="#66707e">Q4 CY2017</text>
<text transform="translate(1760.0,808) rotate(-45)" text-anchor="end" font-size="9.2" fill="#66707e">Q1 CY2018</text>
<text transform="translate(1785.3,808) rotate(-45)" text-anchor="end" font-size="9.2" fill="#66707e">Q2 CY2018</text>
<text transform="translate(1810.6,808) rotate(-45)" text-anchor="end" font-size="9.2" fill="#66707e">Q3 CY2018</text>
<text transform="translate(1836.0,808) rotate(-45)" text-anchor="end" font-size="9.2" fill="#66707e">Q4 CY2018</text>
<text transform="translate(1066,712.8) rotate(-90)" text-anchor="middle" font-size="9.3" fill="#64728a">Sum of Unrealized Value</text></svg>
<div class="abs" style="left:640px;top:300px;width:385px;height:27px;background:#efeeed;border-bottom:1px solid #a9b3c0;border-left:1px solid #e3e5e8"></div>
<div class="abs" style="left:780px;top:300px;width:1px;height:144px;background:#dcdfe3"></div>
<div class="abs" style="left:645px;top:308px;font-size:9.4px;color:#687384;line-height:11px">Account</div>
<div class="abs" style="left:785px;top:308px;font-size:9.4px;color:#687384;line-height:11px;white-space:nowrap">Average Most Recent Metrics: Total Multiple</div>
<svg class="abs" style="left:973px;top:309px" width="5" height="8" viewBox="0 0 5 8"><path d="M2.5,0.5V6.5M0.3,4.2L2.5,6.8L4.7,4.2" fill="none" stroke="#6b7685" stroke-width="1.2"/></svg>
<div class="abs" style="left:640px;top:327px;width:385px;height:20px;border-bottom:1px solid #e3e5e8;border-left:1px solid #e3e5e8"></div>
<div class="abs" style="left:645px;top:331px;font-size:9.4px;color:#3283cc;line-height:11px;white-space:nowrap">Spanning Cloud Apps</div>
<div class="abs" style="left:965px;width:55px;text-align:right;top:331px;font-size:9.4px;color:#4a5260;line-height:11px">9</div>
<div class="abs" style="left:640px;top:347px;width:385px;height:20px;border-bottom:1px solid #e3e5e8;border-left:1px solid #e3e5e8"></div>
<div class="abs" style="left:645px;top:351px;font-size:9.4px;color:#3283cc;line-height:11px;white-space:nowrap">Moz</div>
<div class="abs" style="left:965px;width:55px;text-align:right;top:351px;font-size:9.4px;color:#4a5260;line-height:11px">4</div>
<div class="abs" style="left:640px;top:367px;width:385px;height:20px;border-bottom:1px solid #e3e5e8;border-left:1px solid #e3e5e8"></div>
<div class="abs" style="left:645px;top:371px;font-size:9.4px;color:#3283cc;line-height:11px;white-space:nowrap">VersionOne</div>
<div class="abs" style="left:965px;width:55px;text-align:right;top:371px;font-size:9.4px;color:#4a5260;line-height:11px">3</div>
<div class="abs" style="left:640px;top:387px;width:385px;height:20px;border-bottom:1px solid #e3e5e8;border-left:1px solid #e3e5e8"></div>
<div class="abs" style="left:645px;top:391px;font-size:9.4px;color:#3283cc;line-height:11px;white-space:nowrap">Kollective Technology</div>
<div class="abs" style="left:965px;width:55px;text-align:right;top:391px;font-size:9.4px;color:#4a5260;line-height:11px">3</div>
<div class="abs" style="left:640px;top:407px;width:385px;height:20px;border-bottom:1px solid #e3e5e8;border-left:1px solid #e3e5e8"></div>
<div class="abs" style="left:645px;top:411px;font-size:9.4px;color:#3283cc;line-height:11px;white-space:nowrap">Resonate</div>
<div class="abs" style="left:965px;width:55px;text-align:right;top:411px;font-size:9.4px;color:#4a5260;line-height:11px">3</div>
<div class="abs" style="left:640px;top:427px;width:385px;height:17px;background:#eef5fc;border-bottom:1px solid #dfe6ee;border-left:1px solid #e3e5e8"></div>
<div class="abs" style="left:780px;top:300px;width:1px;height:144px;background:#dcdfe3"></div>
<div class="abs" style="left:640px;top:630px;width:385px;height:27px;background:#efeeed;border-bottom:1px solid #a9b3c0;border-left:1px solid #e3e5e8"></div>
<div class="abs" style="left:762px;top:630px;width:1px;height:144px;background:#dcdfe3"></div>
<div class="abs" style="left:645px;top:638px;font-size:9.4px;color:#687384;line-height:11px">Account</div>
<div class="abs" style="left:767px;top:638px;font-size:9.4px;color:#687384;line-height:11px;white-space:nowrap">Average Most Recent Metrics: Total Multiple</div>
<svg class="abs" style="left:955px;top:639px" width="5" height="8" viewBox="0 0 5 8"><path d="M2.5,7V1M0.3,3.3L2.5,0.7L4.7,3.3" fill="none" stroke="#6b7685" stroke-width="1.2"/></svg>
<div class="abs" style="left:640px;top:657px;width:385px;height:20px;border-bottom:1px solid #e3e5e8;border-left:1px solid #e3e5e8"></div>
<div class="abs" style="left:645px;top:661px;font-size:9.4px;color:#3283cc;line-height:11px;white-space:nowrap">Movable Ink</div>
<div class="abs" style="left:965px;width:55px;text-align:right;top:661px;font-size:9.4px;color:#4a5260;line-height:11px">0</div>
<div class="abs" style="left:640px;top:677px;width:385px;height:20px;border-bottom:1px solid #e3e5e8;border-left:1px solid #e3e5e8"></div>
<div class="abs" style="left:645px;top:681px;font-size:9.4px;color:#3283cc;line-height:11px;white-space:nowrap">Clio</div>
<div class="abs" style="left:965px;width:55px;text-align:right;top:681px;font-size:9.4px;color:#4a5260;line-height:11px">1</div>
<div class="abs" style="left:640px;top:697px;width:385px;height:20px;border-bottom:1px solid #e3e5e8;border-left:1px solid #e3e5e8"></div>
<div class="abs" style="left:645px;top:701px;font-size:9.4px;color:#3283cc;line-height:11px;white-space:nowrap">DigitalOcean</div>
<div class="abs" style="left:965px;width:55px;text-align:right;top:701px;font-size:9.4px;color:#4a5260;line-height:11px">1</div>
<div class="abs" style="left:640px;top:717px;width:385px;height:20px;border-bottom:1px solid #e3e5e8;border-left:1px solid #e3e5e8"></div>
<div class="abs" style="left:645px;top:721px;font-size:9.4px;color:#3283cc;line-height:11px;white-space:nowrap">Quantoplan</div>
<div class="abs" style="left:965px;width:55px;text-align:right;top:721px;font-size:9.4px;color:#4a5260;line-height:11px">1</div>
<div class="abs" style="left:640px;top:737px;width:385px;height:20px;border-bottom:1px solid #e3e5e8;border-left:1px solid #e3e5e8"></div>
<div class="abs" style="left:645px;top:741px;font-size:9.4px;color:#3283cc;line-height:11px;white-space:nowrap">Unitrends</div>
<div class="abs" style="left:965px;width:55px;text-align:right;top:741px;font-size:9.4px;color:#4a5260;line-height:11px">1</div>
<div class="abs" style="left:640px;top:757px;width:385px;height:17px;background:#eef5fc;border-bottom:1px solid #dfe6ee;border-left:1px solid #e3e5e8"></div>
<div class="abs" style="left:762px;top:630px;width:1px;height:144px;background:#dcdfe3"></div>
<div class="abs" style="left:0;top:845px;width:1882px;height:1px;background:#a9a9a9"></div></body></html>
